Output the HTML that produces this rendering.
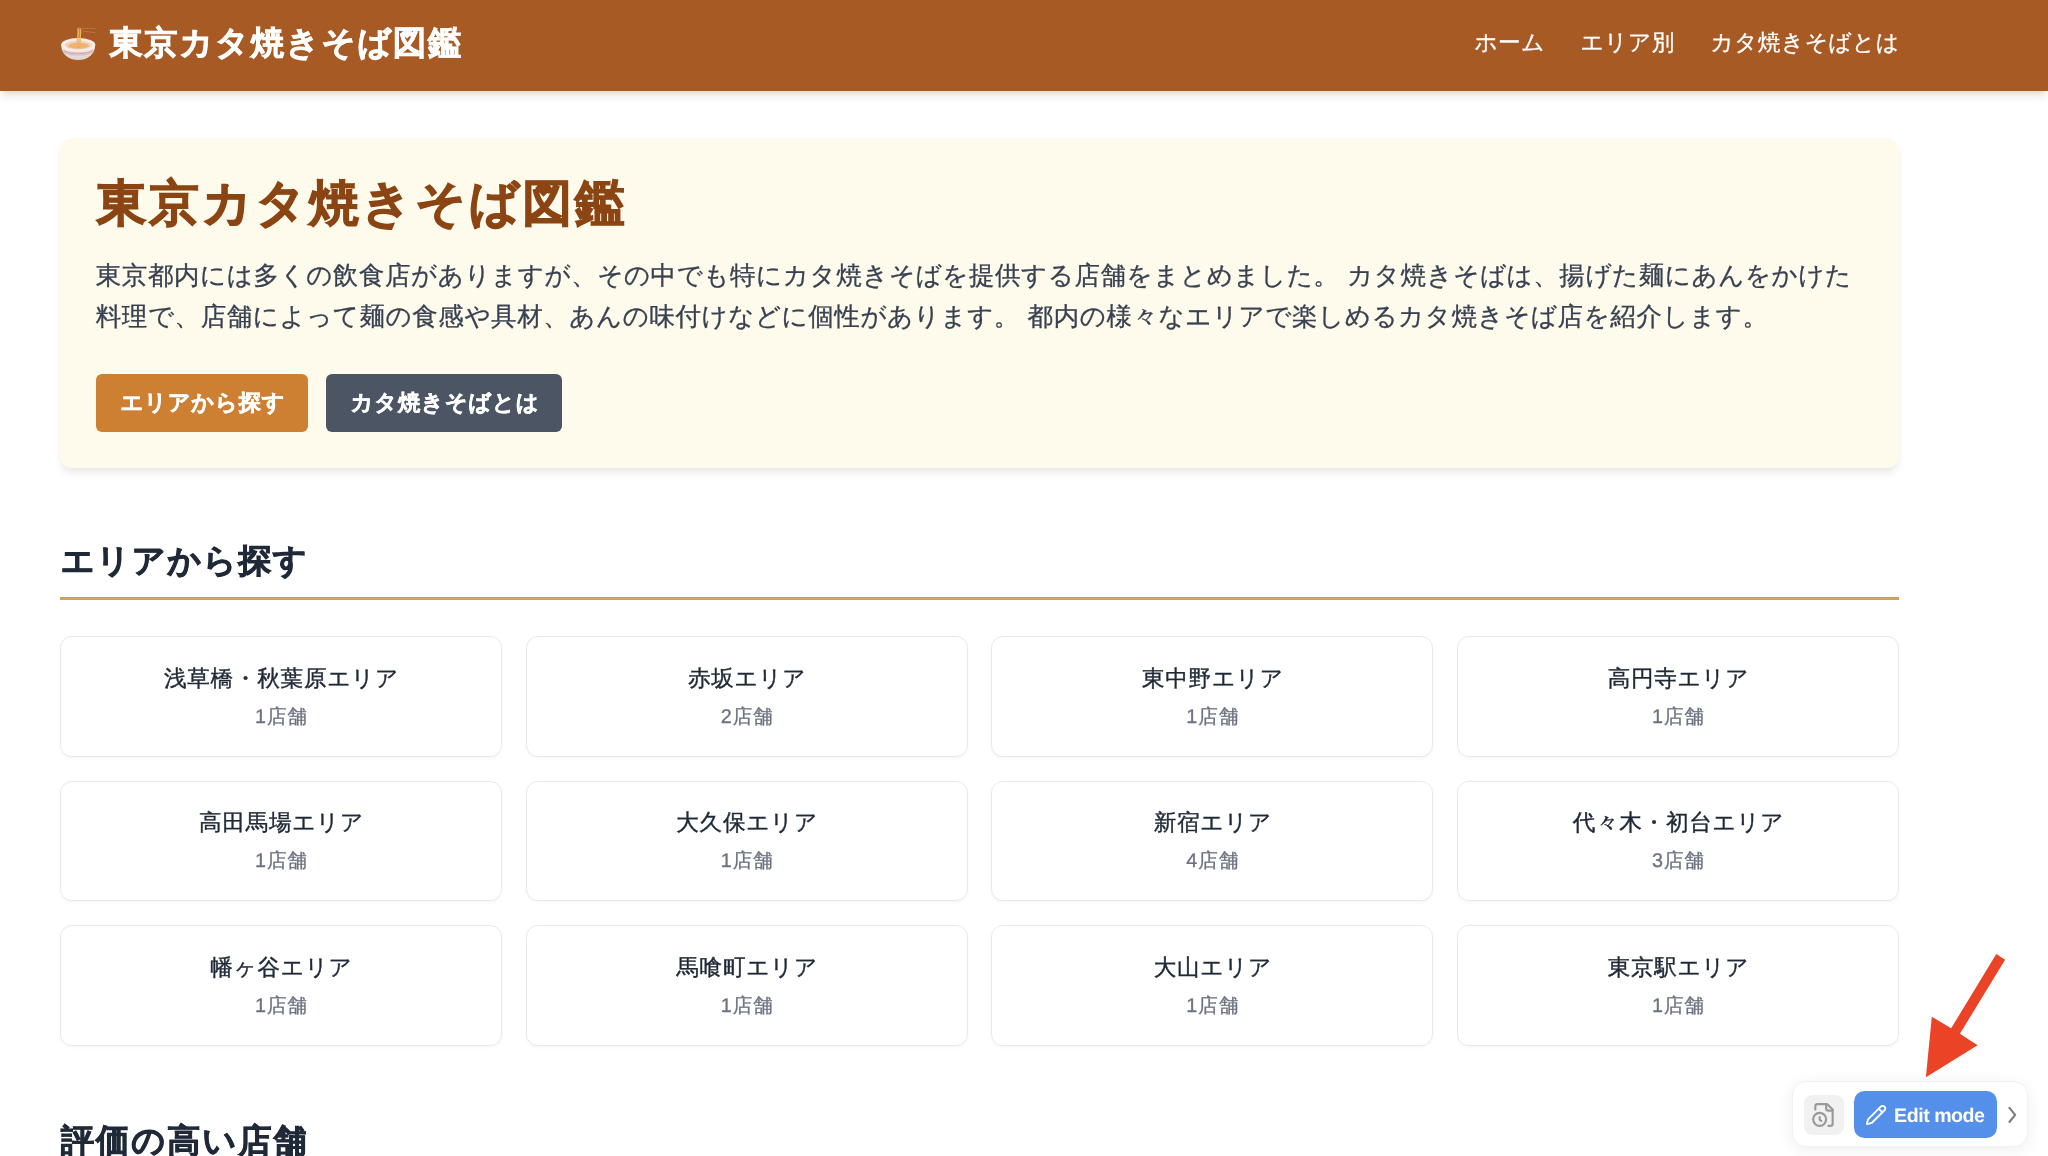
<!DOCTYPE html>
<html lang="ja">
<head>
<meta charset="utf-8">
<title>東京カタ焼きそば図鑑</title>
<style>
*{box-sizing:border-box;margin:0;padding:0}
html,body{width:2048px;height:1156px;overflow:hidden;background:#fff}
body{position:relative;font-family:"Liberation Sans",sans-serif;color:#1f2937;-webkit-font-smoothing:antialiased;text-rendering:geometricPrecision}
a{color:inherit;text-decoration:none}
ul{list-style:none}

/* ---------- header ---------- */
header{will-change:transform;position:absolute;left:0;top:0;width:2048px;height:90.5px;background:#a85a24;color:#fff;
  box-shadow:0 6px 9px -1px rgba(0,0,0,.10),0 3px 6px -2px rgba(0,0,0,.08);z-index:2}
.brand{letter-spacing:1.793px;position:absolute;left:60px;top:19px;height:50px;line-height:50px;font-size:33.2px;font-weight:700;-webkit-text-stroke:.8px #fff;white-space:nowrap}
.brand svg{position:absolute;left:0;top:5px;width:36px;height:40px}
.brand span{text-indent:.9px;position:absolute;left:48.5px;top:0}
nav{position:absolute;right:148.6px;top:25px;height:36px}
nav ul{display:flex;gap:35.4px}
nav li{letter-spacing:.53px;text-indent:.26px;-webkit-text-stroke:.3px #fff;font-size:22.64px;line-height:36px;white-space:nowrap}

/* ---------- main ---------- */
main{will-change:transform;position:absolute;left:60px;top:138px;width:1839.4px}
.hero{position:absolute;left:0;top:0;width:1839.4px;height:329.5px;background:#fefaec;border-radius:11.8px;
  box-shadow:0 6px 9px -1px rgba(0,0,0,.08),0 3px 6px -2px rgba(0,0,0,.05)}
.hero h1{letter-spacing:2.885px;text-indent:1.44px;position:absolute;left:35.4px;top:36.4px;height:59px;line-height:59px;font-size:49.6px;font-weight:700;color:#8b4513;-webkit-text-stroke:1.2px #8b4513;white-space:nowrap}
.hero p{letter-spacing:.612px;position:absolute;left:35.4px;top:117.6px;width:1780px;-webkit-text-stroke:.3px #374151;font-size:25.47px;line-height:41.6px;color:#374151}
.hero p span{text-indent:.34px;display:block;white-space:nowrap}
.btns{position:absolute;left:35.9px;top:235.7px;display:flex;gap:18px}
.btn{letter-spacing:.941px;text-indent:.941px;display:block;height:58.6px;line-height:58.6px;padding:0 23.6px;border-radius:6px;font-size:22.2px;font-weight:700;-webkit-text-stroke:.5px #fff;color:#fff;white-space:nowrap;text-align:center}
.btn.primary{width:212.2px;background:#cd7f32}
.btn.secondary{width:235.6px;background:#4b5563}

h2{position:absolute;left:0;height:47.2px;line-height:47.2px;font-size:33.2px;font-weight:700;color:#1f2937;-webkit-text-stroke:.8px #1f2937;white-space:nowrap}
.areas h2{letter-spacing:1.515px;text-indent:.76px;top:399.8px}
.areas .rule{position:absolute;left:0;top:459.4px;width:1839.4px;height:3px;background:#cfa44e}
.top h2{letter-spacing:1.959px;text-indent:.98px;top:979.5px}

.grid{position:absolute;left:0;top:498px;width:1839.4px;display:grid;grid-template-columns:repeat(4,442.1px);column-gap:23.58px;row-gap:24px}
.card{display:block;position:relative;height:120.5px;background:#fff;border:1.5px solid #e7e8ea;border-radius:11.8px;
  box-shadow:0 1.5px 3px rgba(0,0,0,.03);text-align:center}
.card h3{letter-spacing:.7px;text-indent:.7px;position:absolute;left:0;right:0;top:23.5px;height:35.4px;line-height:35.4px;font-size:22.64px;font-weight:400;color:#1f2937;-webkit-text-stroke:.4px #1f2937;white-space:nowrap}
.card p{letter-spacing:.8px;text-indent:.8px;position:absolute;left:0;right:0;top:65.5px;height:29.5px;line-height:29.5px;font-size:19.8px;color:#6b7280;-webkit-text-stroke:.3px #6b7280;white-space:nowrap}

/* ---------- floating widget ---------- */
.widget{will-change:transform;position:absolute;left:1792px;top:1081px;width:235.5px;height:66px;background:#fff;border:1px solid #f1f1f1;border-radius:14px;
  box-shadow:0 3px 16px rgba(0,0,0,.07);z-index:5}
.w-hist{position:absolute;left:10.6px;top:12.9px;width:40.5px;height:40.5px;border-radius:8.5px;background:#f1f1f1}
.w-hist svg{position:absolute;left:7.25px;top:7.25px;width:26px;height:26px}
.w-edit{position:absolute;left:60.5px;top:9px;width:143.6px;height:47px;border-radius:10.5px;background:#548fea;color:#fff}
.w-edit svg{position:absolute;left:11.6px;top:12.8px;width:22px;height:22px}
.w-edit span{position:absolute;left:40.6px;top:2px;line-height:47px;font-size:19.6px;font-weight:700;letter-spacing:-.48px;white-space:nowrap}
.w-chev{position:absolute;left:213px;top:22px;width:14px;height:22px}
.arrow{position:absolute;left:1900px;top:940px;width:130px;height:150px;z-index:6}
</style>
</head>
<body>

<header>
  <a class="brand" href="#">
    <svg viewBox="0 0 36 40" aria-hidden="true">
      <defs><linearGradient id="bw" x1="0" y1="0" x2="0" y2="1"><stop offset="0" stop-color="#fbf0ec"/><stop offset="1" stop-color="#e3d3ce"/></linearGradient></defs>
      <path d="M20 4.4L35.5 4.6M20.5 6.6L35.5 8.8" stroke="#d59a62" stroke-width="1" opacity=".4" fill="none"/>
      <path d="M1.2 20.5C1.2 30 8 36 18.2 36S35.2 30 35.2 20.5Z" fill="url(#bw)"/>
      <path d="M3.2 26.4C9 30.4 27.4 30.4 33.2 26.4" stroke="#c98a93" stroke-width="1.3" fill="none" opacity=".65"/>
      <path d="M4 28.2C10 32 26.6 32 32.4 28.2" stroke="#a9a3c9" stroke-width="1.1" fill="none" opacity=".5"/>
      <ellipse cx="18.2" cy="20.5" rx="17" ry="6.5" fill="#fbeee8"/>
      <ellipse cx="18.3" cy="21.1" rx="13.8" ry="4.5" fill="#efd6c0"/>
      <ellipse cx="18.5" cy="21.7" rx="10.6" ry="3" fill="#f0b470"/>
      <path d="M18.8 22C17.4 15 20.4 10 18.8 5.2" stroke="#dba150" stroke-width="4.2" stroke-linecap="round" fill="none" opacity=".4"/>
      <path d="M17.6 21.8C16.3 14.8 19.6 10 18 5.2M19.9 21.8C19.3 14.8 21.4 10 20.2 5.2" stroke="#ecbb66" stroke-width="1.4" stroke-linecap="round" fill="none" opacity=".9"/>
    </svg>
    <span>東京カタ焼きそば図鑑</span>
  </a>
  <nav>
    <ul>
      <li><a href="#">ホーム</a></li>
      <li><a href="#">エリア別</a></li>
      <li><a href="#">カタ焼きそばとは</a></li>
    </ul>
  </nav>
</header>

<main>
  <section class="hero">
    <h1>東京カタ焼きそば図鑑</h1>
    <p><span>東京都内には多くの飲食店がありますが、その中でも特にカタ焼きそばを提供する店舗をまとめました。 カタ焼きそばは、揚げた麺にあんをかけた</span><span>料理で、店舗によって麺の食感や具材、あんの味付けなどに個性があります。 都内の様々なエリアで楽しめるカタ焼きそば店を紹介します。</span></p>
    <div class="btns">
      <a class="btn primary" href="#">エリアから探す</a>
      <a class="btn secondary" href="#">カタ焼きそばとは</a>
    </div>
  </section>

  <section class="areas">
    <h2>エリアから探す</h2>
    <div class="rule"></div>
    <div class="grid">
      <a class="card" href="#"><h3>浅草橋・秋葉原エリア</h3><p>1店舗</p></a>
      <a class="card" href="#"><h3>赤坂エリア</h3><p>2店舗</p></a>
      <a class="card" href="#"><h3>東中野エリア</h3><p>1店舗</p></a>
      <a class="card" href="#"><h3>高円寺エリア</h3><p>1店舗</p></a>
      <a class="card" href="#"><h3>高田馬場エリア</h3><p>1店舗</p></a>
      <a class="card" href="#"><h3>大久保エリア</h3><p>1店舗</p></a>
      <a class="card" href="#"><h3>新宿エリア</h3><p>4店舗</p></a>
      <a class="card" href="#"><h3>代々木・初台エリア</h3><p>3店舗</p></a>
      <a class="card" href="#"><h3>幡ヶ谷エリア</h3><p>1店舗</p></a>
      <a class="card" href="#"><h3>馬喰町エリア</h3><p>1店舗</p></a>
      <a class="card" href="#"><h3>大山エリア</h3><p>1店舗</p></a>
      <a class="card" href="#"><h3>東京駅エリア</h3><p>1店舗</p></a>
    </div>
  </section>

  <section class="top">
    <h2>評価の高い店舗</h2>
  </section>
</main>

<svg class="arrow" viewBox="1900 940 130 150" aria-hidden="true">
  <polygon fill="#ea4325" points="1996.3,954 2005.1,959.7 1959.9,1033.7 1977.6,1045.3 1925.9,1077.3 1931.8,1016.8 1951.2,1028.2"/>
</svg>

<div class="widget">
  <div class="w-hist"><svg viewBox="0 0 24 24" fill="none" stroke="#9a9a9a" stroke-width="2" stroke-linecap="round" stroke-linejoin="round"><path d="M16 22h2a2 2 0 0 0 2-2V7l-5-5H6a2 2 0 0 0-2 2v3"/><path d="M14 2v4a2 2 0 0 0 2 2h4"/><circle cx="8" cy="16" r="6"/><path d="M9.5 17.5 8 16.25V14"/></svg></div>
  <div class="w-edit"><svg viewBox="0 0 24 24" fill="none" stroke="#fff" stroke-width="2" stroke-linecap="round" stroke-linejoin="round"><path d="M21.174 6.812a1 1 0 0 0-3.986-3.987L3.842 16.174a2 2 0 0 0-.5.83l-1.321 4.352a.5.5 0 0 0 .623.622l4.353-1.32a2 2 0 0 0 .83-.497z"/><path d="m15 5 4 4"/></svg><span>Edit mode</span></div>
  <svg class="w-chev" viewBox="0 0 14 22" fill="none" stroke="#7d7d7d" stroke-width="2.1" stroke-linecap="round" stroke-linejoin="round"><path d="M3.4 3.8l5.8 7.1-5.8 7.1"/></svg>
</div>

</body>
</html>
